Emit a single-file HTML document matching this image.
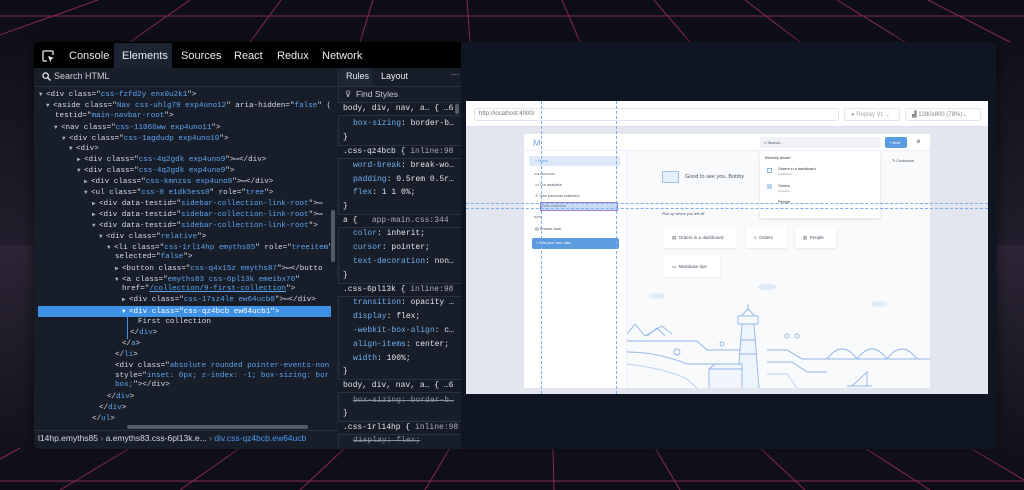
<!DOCTYPE html>
<html><head><meta charset="utf-8"><style>
*{margin:0;padding:0;box-sizing:border-box}
body{width:1024px;height:490px;overflow:hidden;background:#0d0d16;font-family:"Liberation Sans",sans-serif;position:relative}
.abs{position:absolute}
.el{position:absolute;white-space:nowrap;font-size:7.6px;color:#d6dbe4;font-family:"Liberation Mono",monospace;line-height:11px}
.v{color:#5aa6f2}
.ar{display:inline-block;width:7px;color:#aab1bd;font-size:6px}
.r{position:absolute;left:343px;white-space:nowrap;font-size:8px;font-family:"Liberation Mono",monospace;color:#e2e6ec;line-height:12px}
.p{color:#6cb0f0}
.sel{left:338px;width:123px;padding-left:5px;background:#161c27;border-top:1px solid #2a3140;border-bottom:1px solid #2a3140}
.s{color:#8b919c;text-decoration:line-through}
.tab{position:absolute;top:44px;height:24px;line-height:24px;font-size:11px;color:#e8ebf0}
.px{font-size:3.8px;color:#4a5566;position:absolute;white-space:nowrap}
</style></head><body>
<svg class="abs" style="left:0;top:0" width="1024" height="490">
<defs><linearGradient id="gt" x1="0" y1="0" x2="0" y2="1"><stop offset="0" stop-color="#0d0d16"/><stop offset="1" stop-color="#221d2c"/></linearGradient>
<linearGradient id="gb" x1="0" y1="0" x2="0" y2="1"><stop offset="0" stop-color="#2c2536"/><stop offset="1" stop-color="#0e0d16"/></linearGradient></defs>
<rect x="0" y="0" width="1024" height="245" fill="url(#gt)"/>
<rect x="0" y="245" width="1024" height="245" fill="url(#gb)"/>
<g stroke="#b0306e" stroke-width="1" opacity="0.75">
<line x1="0" y1="16" x2="1024" y2="16"/>
<line x1="0" y1="481" x2="1024" y2="481"/>
<line x1="98" y1="0" x2="-20" y2="42"/><line x1="190" y1="0" x2="130" y2="42"/><line x1="281" y1="0" x2="250" y2="42"/><line x1="373" y1="0" x2="360" y2="42"/><line x1="467" y1="0" x2="470" y2="42"/><line x1="562" y1="0" x2="580" y2="42"/><line x1="654" y1="0" x2="690" y2="42"/><line x1="745" y1="0" x2="800" y2="42"/><line x1="837" y1="0" x2="905" y2="42"/><line x1="928" y1="0" x2="1010" y2="42"/>
<line x1="20" y1="448" x2="-20" y2="470"/><line x1="130" y1="448" x2="60" y2="490"/><line x1="240" y1="448" x2="180" y2="490"/><line x1="345" y1="448" x2="300" y2="490"/><line x1="450" y1="448" x2="425" y2="490"/><line x1="553" y1="448" x2="554" y2="490"/><line x1="655" y1="448" x2="680" y2="490"/><line x1="760" y1="448" x2="805" y2="490"/><line x1="865" y1="448" x2="930" y2="490"/><line x1="970" y1="448" x2="1024" y2="480"/>
</g></svg>
<div class="abs" style="left:34px;top:42px;width:962px;height:407px;background:#0f1523;border-radius:5px;overflow:hidden;box-shadow:0 0 12px rgba(0,0,0,.6)">
 <div class="abs" style="left:0;top:0;width:427px;height:26px;background:#000"></div>
 <div class="abs" style="left:0;top:26px;width:427px;height:381px;background:#171d29"></div>
</div>
<svg class="abs" style="left:42px;top:50px" width="13" height="13" viewBox="0 0 13 13"><path d="M5 11H2a1 1 0 0 1-1-1V2a1 1 0 0 1 1-1h8a1 1 0 0 1 1 1v3" fill="none" stroke="#e8ebf0" stroke-width="1.3"/><path d="M6 6l6 2-2.5 1L8.5 12z" fill="#e8ebf0"/></svg>
<div class="tab" style="left:69px">Console</div>
<div class="abs" style="left:114px;top:43px;width:58px;height:25px;background:#1c2434"></div>
<div class="tab" style="left:122px">Elements</div>
<div class="tab" style="left:181px">Sources</div>
<div class="tab" style="left:234px">React</div>
<div class="tab" style="left:277px">Redux</div>
<div class="tab" style="left:322px">Network</div>
<svg class="abs" style="left:42px;top:72px" width="9" height="9" viewBox="0 0 9 9"><circle cx="3.6" cy="3.6" r="2.7" fill="none" stroke="#e8ebf0" stroke-width="1.2"/><line x1="5.6" y1="5.6" x2="8.5" y2="8.5" stroke="#e8ebf0" stroke-width="1.4"/></svg>
<div class="abs" style="left:54px;top:71px;font-size:9px;color:#c9ced6">Search HTML</div>
<div class="abs" style="left:34px;top:86px;width:304px;height:1px;background:#2a3140"></div>
<div class="abs" style="left:338px;top:68px;width:1px;height:380px;background:#2a3140"></div>
<div class="abs" style="left:38px;top:306px;width:293px;height:11px;background:#3f91e6"></div>
<div class="abs" style="left:127px;top:317px;width:1px;height:22px;background:#3f91e6"></div>
<div class="el" style="left:39px;top:89px"><span class="ar">▼</span>&lt;div class="<span class="v">css-fzfd2y enx0u2k1</span>"&gt;</div>
<div class="el" style="left:46px;top:100px"><span class="ar">▼</span>&lt;aside class="<span class="v">Nav css-uhlg79 exp4uno12</span>" aria-hidden="<span class="v">false</span>" (</div>
<div class="el" style="left:55px;top:111px">testid="<span class="v">main-navbar-root</span>"&gt;</div>
<div class="el" style="left:54px;top:122px"><span class="ar">▼</span>&lt;nav class="<span class="v">css-11066ww exp4uno11</span>"&gt;</div>
<div class="el" style="left:62px;top:133px"><span class="ar">▼</span>&lt;div class="<span class="v">css-1agdudp exp4uno10</span>"&gt;</div>
<div class="el" style="left:69px;top:143px"><span class="ar">▼</span>&lt;div&gt;</div>
<div class="el" style="left:77px;top:154px"><span class="ar">▶</span>&lt;div class="<span class="v">css-4q2gdk exp4uno9</span>"&gt;▭&lt;/div&gt;</div>
<div class="el" style="left:77px;top:165px"><span class="ar">▼</span>&lt;div class="<span class="v">css-4q2gdk exp4uno9</span>"&gt;</div>
<div class="el" style="left:84px;top:176px"><span class="ar">▶</span>&lt;div class="<span class="v">css-kmnzss exp4uno8</span>"&gt;▭&lt;/div&gt;</div>
<div class="el" style="left:84px;top:187px"><span class="ar">▼</span>&lt;ul class="<span class="v">css-0 e1dk5ess0</span>" role="<span class="v">tree</span>"&gt;</div>
<div class="el" style="left:92px;top:198px"><span class="ar">▶</span>&lt;div data-testid="<span class="v">sidebar-collection-link-root</span>"&gt;▭</div>
<div class="el" style="left:92px;top:209px"><span class="ar">▶</span>&lt;div data-testid="<span class="v">sidebar-collection-link-root</span>"&gt;▭</div>
<div class="el" style="left:92px;top:220px"><span class="ar">▼</span>&lt;div data-testid="<span class="v">sidebar-collection-link-root</span>"&gt;</div>
<div class="el" style="left:99px;top:231px"><span class="ar">▼</span>&lt;div class="<span class="v">relative</span>"&gt;</div>
<div class="el" style="left:107px;top:242px"><span class="ar">▼</span>&lt;li class="<span class="v">css-1rl14hp emyths85</span>" role="<span class="v">treeitem</span>"</div>
<div class="el" style="left:115px;top:252px">selected="<span class="v">false</span>"&gt;</div>
<div class="el" style="left:115px;top:263px"><span class="ar">▶</span>&lt;button class="<span class="v">css-q4x15z emyths87</span>"&gt;▭&lt;/butto</div>
<div class="el" style="left:115px;top:274px"><span class="ar">▼</span>&lt;a class="<span class="v">emyths83 css-6pl13k emeibx70</span>"</div>
<div class="el" style="left:122px;top:284px">href="<span class="v" style="text-decoration:underline">/collection/9-first-collection</span>"&gt;</div>
<div class="el" style="left:122px;top:294px"><span class="ar">▶</span>&lt;div class="<span class="v">css-17sz4le ew64ucb0</span>"&gt;▭&lt;/div&gt;</div>
<div class="el" style="left:122px;top:306px;color:#fff"><span class="ar" style="color:#fff">▼</span>&lt;div class="css-qz4bcb ew64ucb1"&gt;</div>
<div class="el" style="left:138px;top:317px">First collection</div>
<div class="el" style="left:130px;top:328px">&lt;/<span class="v">div</span>&gt;</div>
<div class="el" style="left:122px;top:339px">&lt;/<span class="v">a</span>&gt;</div>
<div class="el" style="left:115px;top:350px">&lt;/<span class="v">li</span>&gt;</div>
<div class="el" style="left:115px;top:361px">&lt;div class="<span class="v">absolute rounded pointer-events-non</span></div>
<div class="el" style="left:115px;top:371px">style="<span class="v">inset: 0px; z-index: -1; box-sizing: bor</span></div>
<div class="el" style="left:115px;top:380px"><span class="v">box;</span>"&gt;&lt;/div&gt;</div>
<div class="el" style="left:107px;top:392px">&lt;/<span class="v">div</span>&gt;</div>
<div class="el" style="left:99px;top:403px">&lt;/<span class="v">div</span>&gt;</div>
<div class="el" style="left:92px;top:414px">&lt;/<span class="v">ul</span>&gt;</div>
<div class="abs" style="left:331px;top:210px;width:4px;height:52px;background:#555c68;border-radius:2px"></div>
<div class="abs" style="left:127px;top:425px;width:181px;height:4px;background:#555c68;border-radius:2px"></div>
<div class="abs" style="left:34px;top:430px;width:304px;height:1px;background:#2a3140"></div>
<div class="abs" style="left:38px;top:433px;font-size:8.5px;color:#d6dbe4;white-space:nowrap">l14hp.emyths85 <span style="color:#888">›</span> a.emyths83.css-6pl13k.e... <span style="color:#888">›</span> <span style="color:#4a9cf0">div.css-qz4bcb.ew64ucb</span></div>
<div class="abs" style="left:340px;top:68px;width:32px;height:18px;background:#1e2636"></div>
<div class="abs" style="left:346px;top:71px;font-size:9px;color:#e8ebf0">Rules</div>
<div class="abs" style="left:381px;top:71px;font-size:9px;color:#e8ebf0">Layout</div>
<div class="abs" style="left:451px;top:70px;font-size:8px;color:#ccc">···</div>
<div class="abs" style="left:338px;top:86px;width:123px;height:1px;background:#2a3140"></div>
<div class="abs" style="left:345px;top:89px;font-size:8.5px;color:#c9ced6">⊽ &nbsp;Find Styles</div>
<div class="r sel" style="top:102px">body, div, nav, a… { …6</div>
<div class="r" style="left:353px;top:118px"><span class="p">box-sizing</span>: border-b…</div>
<div class="r" style="top:132px">}</div>
<div class="r sel" style="top:145px">.css-qz4bcb { <span style="color:#aab">inline:98</span></div>
<div class="r" style="left:353px;top:160px"><span class="p">word-break</span>: break-wo…</div>
<div class="r" style="left:353px;top:174px"><span class="p">padding</span>: 0.5rem 0.5r…</div>
<div class="r" style="left:353px;top:187px"><span class="p">flex</span>: 1 1 0%;</div>
<div class="r" style="top:201px">}</div>
<div class="r sel" style="top:214px">a { &nbsp;&nbsp;<span style="color:#aab">app-main.css:344</span></div>
<div class="r" style="left:353px;top:228px"><span class="p">color</span>: inherit;</div>
<div class="r" style="left:353px;top:242px"><span class="p">cursor</span>: pointer;</div>
<div class="r" style="left:353px;top:256px"><span class="p">text-decoration</span>: non…</div>
<div class="r" style="top:270px">}</div>
<div class="r sel" style="top:283px">.css-6pl13k { <span style="color:#aab">inline:98</span></div>
<div class="r" style="left:353px;top:297px"><span class="p">transition</span>: opacity …</div>
<div class="r" style="left:353px;top:311px"><span class="p">display</span>: flex;</div>
<div class="r" style="left:353px;top:325px"><span class="p">-webkit-box-align</span>: c…</div>
<div class="r" style="left:353px;top:339px"><span class="p">align-items</span>: center;</div>
<div class="r" style="left:353px;top:353px"><span class="p">width</span>: 100%;</div>
<div class="r" style="top:366px">}</div>
<div class="r sel" style="top:379px">body, div, nav, a… { …6</div>
<div class="r s" style="left:353px;top:395px">box-sizing: border-b…</div>
<div class="r" style="top:408px">}</div>
<div class="r sel" style="top:421px">.css-1rl14hp { <span style="color:#aab">inline:98</span></div>
<div class="r s" style="left:353px;top:435px">display: flex;</div>
<div class="abs" style="left:455px;top:104px;width:4px;height:10px;background:#555c68;border-radius:2px"></div>
<div class="abs" style="left:466px;top:101px;width:522px;height:293px;background:#e3e6ee;overflow:hidden">
 <div class="abs" style="left:0;top:0;width:522px;height:26px;background:#fff;border-bottom:1px solid #dde"></div>
 <div class="abs" style="left:8px;top:7px;width:365px;height:13px;border:1px solid #e3e6ec;border-radius:2px;font-size:6px;color:#777;padding:2px 4px">http://localhost:4000/</div>
 <div class="abs" style="left:378px;top:7px;width:56px;height:13px;border:1px solid #e3e6ec;border-radius:2px;font-size:6px;color:#aaa;padding:2px 6px">● Replay 91 ⌄</div>
 <div class="abs" style="left:439px;top:7px;width:76px;height:13px;border:1px solid #e3e6ec;border-radius:2px;font-size:6px;color:#888;padding:2px 6px">▟ 1280x800 (78%)⌄</div>
 <div class="abs" style="left:58px;top:33px;width:406px;height:254px;background:#f8fafc">
  <div class="abs" style="left:0;top:0;width:406px;height:17px;background:#fff;border-bottom:1px solid #eef"></div>
  <div class="abs" style="left:9px;top:4px;font-size:9px;color:#7aa7e0">M</div>
  <div class="abs" style="left:236px;top:3px;width:120px;height:11px;background:#f0f2f5;border-radius:2px"></div>
  <div class="px" style="left:240px;top:6px;font-size:4px">⌕ Search...</div>
  <div class="abs" style="left:361px;top:3px;width:22px;height:11px;background:#5b9be0;border-radius:2px;font-size:4px;color:#fff;padding:3px 4px">+ New</div>
  <div class="px" style="left:392px;top:5px;font-size:5px">⚙</div>
  <div class="abs" style="left:0;top:17px;width:103px;height:237px;background:#fff;border-right:1px solid #eef"></div>
  <div class="abs" style="left:5px;top:22px;width:91px;height:10px;background:#dde9f8;border-radius:2px"></div>
  <div class="px" style="left:11px;top:25px;color:#5b9be0">⌂ Home</div>
  <div class="px" style="left:10px;top:38px;font-size:3px">COLLECTIONS</div>
  <div class="px" style="left:11px;top:48px">▭ Our analytics</div>
  <div class="px" style="left:11px;top:59px">♙ Your personal collection</div>
  <div class="abs" style="left:16px;top:68px;width:78px;height:9px;background:#c7dcf3;border:1.5px solid #a07ed8"></div>
  <div class="px" style="left:18px;top:70px;color:#5b7fa0">First collection</div>
  <div class="px" style="left:10px;top:81px;font-size:3px">DATA</div>
  <div class="px" style="left:11px;top:92px">▤ Browse data</div>
  <div class="abs" style="left:8px;top:104px;width:87px;height:11px;background:#5b9be0;border-radius:2px"></div>
  <div class="px" style="left:12px;top:107px;color:#fff">+ Add your own data</div>
  <div class="abs" style="left:138px;top:37px;width:17px;height:12px;border:1.5px solid #9cc0ea;background:#e6f0fb;border-radius:1px"></div>
  <div class="abs" style="left:161px;top:40px;font-size:5.5px;color:#4a5566">Good to see you, Bobby</div>
  <div class="abs" style="left:236px;top:17px;width:120px;height:67px;background:#fff;box-shadow:0 1px 3px rgba(0,0,0,.12)"></div>
  <div class="px" style="left:241px;top:22px;font-size:3.5px;color:#333">Recently viewed</div>
  <div class="px" style="left:254px;top:33px;color:#333">Orders in a dashboard</div>
  <div class="px" style="left:254px;top:38px;font-size:3px;color:#999">Dashboard</div>
  <div class="px" style="left:254px;top:50px;color:#333">Orders</div>
  <div class="px" style="left:254px;top:55px;font-size:3px;color:#999">Question</div>
  <div class="px" style="left:254px;top:66px;color:#333">People</div>
  <div class="abs" style="left:243px;top:34px;width:5px;height:5px;border:1px solid #8db6e8"></div>
  <div class="abs" style="left:243px;top:50px;width:5px;height:5px;background:#b9d3f1"></div>
  <div class="px" style="left:368px;top:24px">✎ Customize</div>
  <div class="px" style="left:138px;top:78px">Pick up where you left off</div>
  <div class="abs" style="left:139px;top:93px;width:74px;height:21px;background:#fff;box-shadow:0 1px 2px rgba(0,0,0,.08)"></div>
  <div class="px" style="left:148px;top:101px;font-size:4.5px">▤ &nbsp;Orders in a dashboard</div>
  <div class="abs" style="left:222px;top:93px;width:41px;height:21px;background:#fff;box-shadow:0 1px 2px rgba(0,0,0,.08)"></div>
  <div class="px" style="left:230px;top:101px;font-size:4.5px">≡ &nbsp;Orders</div>
  <div class="abs" style="left:271px;top:93px;width:41px;height:21px;background:#fff;box-shadow:0 1px 2px rgba(0,0,0,.08)"></div>
  <div class="px" style="left:279px;top:101px;font-size:4.5px">▥ &nbsp;People</div>
  <div class="abs" style="left:139px;top:122px;width:57px;height:21px;background:#fff;box-shadow:0 1px 2px rgba(0,0,0,.08)"></div>
  <div class="px" style="left:148px;top:130px;font-size:4.5px">▭ &nbsp;Metabase tips</div>
  <svg class="abs" style="left:103px;top:150px" width="303" height="104" viewBox="0 0 303 104" fill="none" stroke="#8fb5e6" stroke-width="0.9">
   <path d="M0 50 L8 40 L18 52 L35 42 L45 50 M20 52 L30 44 L38 52"/>
   <path d="M0 57 H70 L80 66 H124 M140 66 H160 L175 75 H303"/>
   <path d="M0 68 Q30 68 60 80 H124 M140 78 H165 L180 88 H200"/>
   <path d="M0 80 Q40 85 60 95 L70 104 M140 90 H160 L170 104" stroke="#b7d0f0"/>
   <path d="M110 104 L115 40 H127 L132 104 M112 70 H130 M113 56 H129" fill="#eef4fc"/>
   <rect x="111" y="32" width="20" height="8"/><path d="M114 32 L121 25 L128 32 M121 25 V20"/>
   <path d="M82 104 V85 L88 80 H115 V104 M82 85 H115" fill="#f2f6fc"/>
   <path d="M200 75 Q215 55 230 75 Q245 55 260 75 Q275 55 290 75"/>
   <path d="M225 102 L240 88 V102 Z M220 102 H245"/>
   <circle cx="160" cy="52" r="2"/><circle cx="170" cy="52" r="2"/><circle cx="50" cy="68" r="3"/><circle cx="95" cy="60" r="2"/>
   <ellipse cx="30" cy="12" rx="8" ry="3" fill="#e0ebf8" stroke="none"/><ellipse cx="140" cy="3" rx="10" ry="3" fill="#e0ebf8" stroke="none"/><ellipse cx="252" cy="20" rx="8" ry="3" fill="#e0ebf8" stroke="none"/>
  </svg>
 </div>
 <div class="abs" style="left:75px;top:0;width:0;height:293px;border-left:1px dashed #7aaee8"></div>
 <div class="abs" style="left:150px;top:0;width:0;height:293px;border-left:1px dashed #7aaee8"></div>
 <div class="abs" style="left:0;top:102px;width:522px;height:0;border-top:1px dashed #7aaee8"></div>
 <div class="abs" style="left:0;top:107px;width:522px;height:0;border-top:1px dashed #7aaee8"></div>
</div>
</body></html>
